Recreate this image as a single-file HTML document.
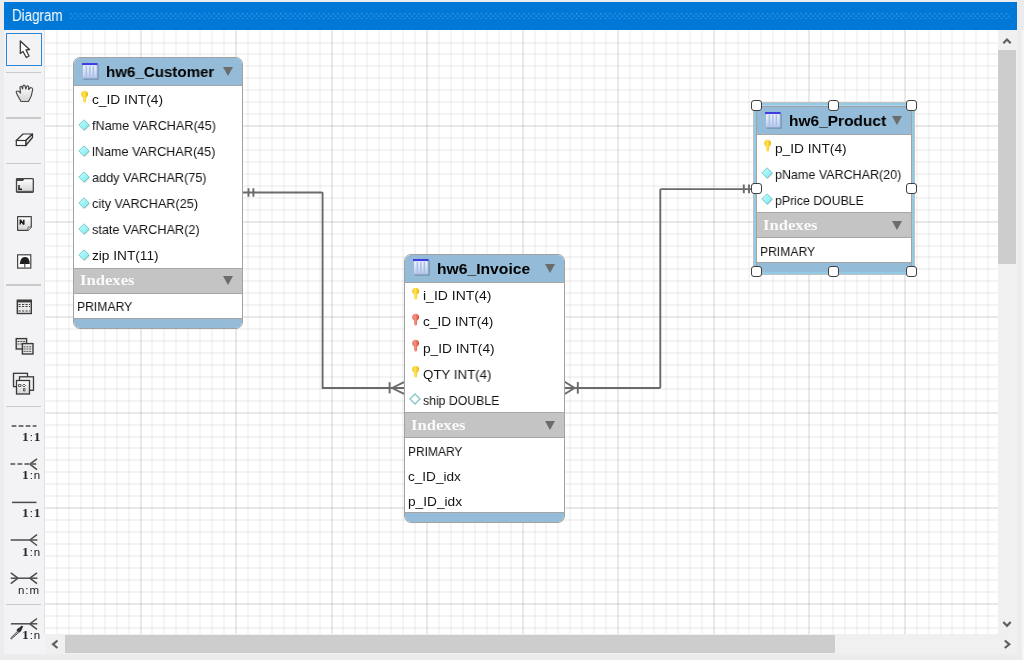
<!DOCTYPE html>
<html><head><meta charset="utf-8"><style>
*{margin:0;padding:0;box-sizing:border-box}
html,body{width:1024px;height:660px;overflow:hidden;background:#ececef;font-family:"Liberation Sans",sans-serif}
#hdr{position:absolute;left:4px;top:2px;width:1013px;height:28px;background:#0078d7}
#hdr .t{position:absolute;left:8.4px;top:5.4px;color:#fff;font-size:15.6px;line-height:18px}
#dots{position:absolute;left:65.9px;top:11.1px;width:941px;height:9px}
#tool{position:absolute;left:4px;top:30px;width:40.5px;height:624px;background:#f3f3f5}
#selbtn{position:absolute;left:6.4px;top:33px;width:35.3px;height:32.6px;border:1.3px solid #2b88d8}
.sep{position:absolute;left:6.4px;width:34.6px;height:1.6px;background:#c9c9c9}
.tsvg{position:absolute;left:0;top:0;overflow:visible}
.rtxt{position:absolute;font-family:"Liberation Sans",sans-serif;font-size:11.5px;line-height:13px;color:#222;white-space:nowrap;letter-spacing:0.9px;will-change:transform}
.rtxt i{font-style:normal;font-family:"Liberation Serif",serif;font-weight:bold;font-size:13.5px;-webkit-text-stroke:0;color:#2a2a2a}
#tline{position:absolute;left:44px;top:30px;width:1.5px;height:604px;background:#e2e2e2}
#canvas{position:absolute;left:45px;top:30px;width:953px;height:604px;background:#fff;overflow:hidden}
#vs{position:absolute;left:998px;top:30px;width:19px;height:604px;background:#f0f0f0}
#vthumb{position:absolute;left:998px;top:50px;width:18px;height:214px;background:#cdcdcd}
#hs{position:absolute;left:45px;top:634px;width:972px;height:20px;background:#f0f0f0}
#hthumb{position:absolute;left:65px;top:635px;width:770px;height:18px;background:#cdcdcd}
.tbl{position:absolute;background:#fff;border:1px solid #a2a2a2;overflow:hidden}
.tbl>div{position:absolute}
.hd{left:0;right:0;top:0;background:#94bcd8}
.ln{left:0;right:0;height:1.2px;background:#a6a6a6}
.ico{line-height:0}
.tt{font-weight:bold;font-size:15.5px;line-height:18px;color:#000;white-space:nowrap}
.tri{width:0;height:0;border-left:5.2px solid transparent;border-right:5.2px solid transparent;border-top:9.3px solid #6c6c6c}
.rt{font-size:13.4px;line-height:15.5px;color:#141414;white-space:nowrap}
.ih{left:0;right:0;background:#c4c4c4;border-top:1px solid #a8a8a8;border-bottom:1px solid #a8a8a8}
.itx{font-family:"Liberation Serif",serif;font-weight:bold;font-size:14px;line-height:16px;color:#fafafa;white-space:nowrap}
.bar{left:0;right:0;background:#94bcd8;border-top:1px solid #a4a4a4}
.sx{display:inline-block;transform-origin:0 0;will-change:transform}
.hdl{position:absolute;width:11px;height:11px;border:1.7px solid #404040;border-radius:3px;background:#fff}
#sel{position:absolute;left:752.6px;top:102.2px;width:162px;height:172.8px;border:1px solid #c0c0c0;box-shadow:inset 0 0 0 2.8px #93cbe6}
</style></head><body>
<svg width="0" height="0" style="position:absolute"><defs>
<linearGradient id="tg" x1="0" y1="0" x2="0" y2="1"><stop offset="0" stop-color="#f4f8fe"/><stop offset="1" stop-color="#b9ccee"/></linearGradient>
<linearGradient id="ky" x1="0" y1="0" x2="1" y2="0"><stop offset="0" stop-color="#f5c818"/><stop offset="0.45" stop-color="#ffe45a"/><stop offset="1" stop-color="#e6b000"/></linearGradient>
<linearGradient id="kr" x1="0" y1="0" x2="1" y2="0"><stop offset="0" stop-color="#e87c6a"/><stop offset="0.45" stop-color="#f09080"/><stop offset="1" stop-color="#d84834"/></linearGradient>
<linearGradient id="dg" x1="0" y1="0" x2="1" y2="1"><stop offset="0" stop-color="#d0fcfc"/><stop offset="1" stop-color="#6eecf0"/></linearGradient>
<linearGradient id="ig" x1="0" y1="0" x2="0" y2="1"><stop offset="0" stop-color="#ffffff"/><stop offset="1" stop-color="#d4d4d4"/></linearGradient>
</defs></svg>
<div id="hdr"><span class="t"><span class="sx" id="tdiag" style="transform:scaleX(0.8568)">Diagram</span></span>
<svg id="dots" width="944" height="9"><defs><pattern id="dp" width="4.774" height="4.8" patternUnits="userSpaceOnUse"><rect x="0" y="0" width="1.35" height="1.35" fill="#449ae2"/><rect x="2.387" y="2.4" width="1.35" height="1.35" fill="#449ae2"/></pattern></defs><rect x="0" y="0" width="941" height="6.2" fill="url(#dp)"/></svg>
</div>

<div id="tool"></div>
<div id="selbtn"></div>
<div class="sep" style="top:71.60px"></div><div class="sep" style="top:117.20px"></div><div class="sep" style="top:162.60px"></div><div class="sep" style="top:284.10px"></div><div class="sep" style="top:405.70px"></div><div class="sep" style="top:603.80px"></div>
<svg class="tsvg" width="48" height="660">
<!-- cursor -->
<path d="M20.3 41 L20.3 53.5 L23 51.5 L26.3 57.5 L29 56 L26 50 L29.5 49.5 Z" fill="#fff" stroke="#3a3a3a" stroke-width="1.3" stroke-linejoin="round"/>
<!-- hand -->
<path d="M21 101.5 L16.6 93.5 Q15.6 91 17.5 91 Q19 91 20.5 93 L20 88 Q20 86 21.6 86.6 L22.6 89 L23 85.8 Q24 84.5 25 85.8 L25.8 89 L26.8 86.2 Q28 85.5 28.8 86.8 L28.5 89.5 L30.8 87.5 Q32.5 87.5 32.7 89.5 Q32 96 28.5 101.5 Z" fill="url(#ig)" stroke="#4a4a4a" stroke-width="1.2" stroke-linejoin="round"/>
<!-- eraser -->
<path d="M16.3 140.5 L23 134 L32.5 134 L25.8 140.5 Z" fill="#fafafa" stroke="#333" stroke-width="1.2" stroke-linejoin="round"/>
<path d="M25.8 140.5 L32.5 134 L32.5 137.5 L25.8 145.5 Z" fill="#e0e0e0" stroke="#333" stroke-width="1.2" stroke-linejoin="round"/>
<rect x="16.3" y="140.5" width="9.5" height="5" fill="#fff" stroke="#333" stroke-width="1.2"/>
<!-- layer -->
<rect x="16.5" y="178.7" width="16.8" height="13.6" rx="0.8" fill="url(#ig)" stroke="#444" stroke-width="1.3"/>
<path d="M16.5 178.7 H24.5 L23 181 H16.5 Z" fill="#444"/>
<rect x="16.5" y="190.8" width="16.8" height="1.6" fill="#555"/>
<path d="M19 185 V189.2 H22" stroke="#222" stroke-width="1.5" fill="none"/>
<!-- note -->
<path d="M17.6 216.6 H31.3 V227 L28 230.3 H17.6 Z" fill="url(#ig)" stroke="#444" stroke-width="1.2" stroke-linejoin="round"/>
<path d="M20.3 224.5 V219.8 L23.8 224.5 V219.8" stroke="#1e1e1e" stroke-width="1.5" fill="none" stroke-linejoin="bevel"/><path d="M28 230.3 L28 227.2 L31.3 227" fill="#fff" stroke="#555" stroke-width="0.9"/>
<!-- image -->
<rect x="17.6" y="254.8" width="13.2" height="13.3" fill="#fff" stroke="#444" stroke-width="1.2"/>
<path d="M19.8 264 Q20.2 259.2 22.8 257.4 Q25.6 256.2 28.2 258.2 Q29.9 260.6 29.7 264 Z" fill="#1e1e1e"/>
<rect x="24.3" y="263" width="1" height="4.5" fill="#333"/>
<!-- table -->
<rect x="17.3" y="300.2" width="14" height="13.3" fill="#e8e8e8" stroke="#3a3a3a" stroke-width="1.4"/>
<rect x="17.3" y="300.2" width="14" height="2.2" fill="#3a3a3a"/>
<path d="M18.5 304.5 H30 M18.5 306.5 H30 M18.5 311 H30" stroke="#444" stroke-width="1" stroke-dasharray="2.2 1.3"/>
<!-- view -->
<rect x="16.2" y="338.6" width="10.4" height="10.4" fill="#e4e4e4" stroke="#3a3a3a" stroke-width="1.4"/>
<path d="M17.5 341.5 H25.5 M17.5 344 H25.5" stroke="#555" stroke-width="1" stroke-dasharray="2 0.8"/>
<rect x="22.4" y="343.6" width="10.6" height="10.4" fill="#e8e8e8" stroke="#3a3a3a" stroke-width="1.4"/>
<path d="M23.6 346.8 H32 M23.6 349 H32 M23.6 351.4 H32" stroke="#555" stroke-width="1" stroke-dasharray="2 0.8"/>
<!-- routine group -->
<rect x="13.5" y="373.3" width="14" height="13.3" fill="#eee" stroke="#3a3a3a" stroke-width="1.3"/>
<rect x="19.5" y="376.8" width="14" height="13.5" fill="#eee" stroke="#3a3a3a" stroke-width="1.3"/>
<rect x="16.5" y="380.5" width="13" height="13.5" fill="url(#ig)" stroke="#3a3a3a" stroke-width="1.3"/>
<path d="M18.5 384.5 H21 V386.5 H18.5Z M22.5 385.5 L24 384 L25.5 385.5 L24 387Z M23.5 388.5 H25 V391 H23.5Z" stroke="#444" stroke-width="0.8" fill="none"/>
<!-- dropper -->
<path d="M17.6 631.2 L11.2 637.6 Q10.2 638.8 11.4 639 L18.8 632.4 Z" fill="#b8b8b8" stroke="#505050" stroke-width="1"/>
<path d="M16.4 630.3 Q17.5 628 19.8 627.2 L21.4 625.8 Q22.8 625.6 23.2 626.6 L22.2 628.4 Q21.6 631 19.4 632.6 Z" fill="#2e2e2e"/>
</svg>
<svg class="tsvg" width="48" height="660"><g stroke="#4c4c4c" stroke-width="1.5" fill="none"><path d="M11.7 426 H36.5" stroke-dasharray="4.7 2.3"/></g></svg>
<div class="rtxt" style="left:21.8px;top:429.6px"><i>1</i>:<i>1</i></div>
<svg class="tsvg" width="48" height="660"><g stroke="#4c4c4c" stroke-width="1.5" fill="none"><path d="M10.5 464.1 H37" stroke-dasharray="4.7 2.3"/><path d="M29.8 464.1 L37 458.8 M29.8 464.1 L37 469.6"/></g></svg>
<div class="rtxt" style="left:22.0px;top:468.4px"><i>1</i>:n</div>
<svg class="tsvg" width="48" height="660"><g stroke="#4c4c4c" stroke-width="1.5" fill="none"><path d="M12 502.4 H36.5"/></g></svg>
<div class="rtxt" style="left:21.8px;top:506.2px"><i>1</i>:<i>1</i></div>
<svg class="tsvg" width="48" height="660"><g stroke="#4c4c4c" stroke-width="1.5" fill="none"><path d="M10.7 540 H37.4"/><path d="M29.8 540 L37 534.7 M29.8 540 L37 545.5"/></g></svg>
<div class="rtxt" style="left:21.8px;top:544.8px"><i>1</i>:n</div>
<svg class="tsvg" width="48" height="660"><g stroke="#4c4c4c" stroke-width="1.5" fill="none"><path d="M10.7 578.2 H37.4"/><path d="M29.8 578.2 L37 572.9000000000001 M29.8 578.2 L37 583.7"/><path d="M18 578.2 L10.8 572.9000000000001 M18 578.2 L10.8 583.7"/></g></svg>
<div class="rtxt" style="left:17.6px;top:584.0px">n:m</div>
<svg class="tsvg" width="48" height="660"><g stroke="#4c4c4c" stroke-width="1.5" fill="none"><path d="M10.9 623.8 H37.3"/><path d="M29.8 623.8 L37 618.5 M29.8 623.8 L37 629.3"/></g></svg>
<div class="rtxt" style="left:21.9px;top:628.2px"><i>1</i>:n</div>

<div id="tline"></div>
<div style="position:absolute;left:1021.6px;top:30px;width:2.4px;height:630px;background:#f6f6f7"></div>
<div id="canvas">
<svg width="953" height="604" style="position:absolute;left:0;top:0">
<rect x="11" y="0" width="2" height="604" fill-opacity="0.038"/>
<rect x="23" y="0" width="2" height="604" fill-opacity="0.038"/>
<rect x="35" y="0" width="2" height="604" fill-opacity="0.038"/>
<rect x="47" y="0" width="2" height="604" fill-opacity="0.038"/>
<rect x="59" y="0" width="2" height="604" fill-opacity="0.038"/>
<rect x="71" y="0" width="2" height="604" fill-opacity="0.038"/>
<rect x="83" y="0" width="2" height="604" fill-opacity="0.038"/>
<rect x="95" y="0" width="2" height="604" fill-opacity="0.085"/>
<rect x="106" y="0" width="2" height="604" fill-opacity="0.038"/>
<rect x="118" y="0" width="2" height="604" fill-opacity="0.038"/>
<rect x="130" y="0" width="2" height="604" fill-opacity="0.038"/>
<rect x="142" y="0" width="2" height="604" fill-opacity="0.038"/>
<rect x="154" y="0" width="2" height="604" fill-opacity="0.038"/>
<rect x="166" y="0" width="2" height="604" fill-opacity="0.038"/>
<rect x="178" y="0" width="2" height="604" fill-opacity="0.038"/>
<rect x="190" y="0" width="2" height="604" fill-opacity="0.085"/>
<rect x="202" y="0" width="2" height="604" fill-opacity="0.038"/>
<rect x="214" y="0" width="2" height="604" fill-opacity="0.038"/>
<rect x="226" y="0" width="2" height="604" fill-opacity="0.038"/>
<rect x="238" y="0" width="2" height="604" fill-opacity="0.038"/>
<rect x="250" y="0" width="2" height="604" fill-opacity="0.038"/>
<rect x="262" y="0" width="2" height="604" fill-opacity="0.038"/>
<rect x="274" y="0" width="2" height="604" fill-opacity="0.038"/>
<rect x="286" y="0" width="2" height="604" fill-opacity="0.085"/>
<rect x="297" y="0" width="2" height="604" fill-opacity="0.038"/>
<rect x="309" y="0" width="2" height="604" fill-opacity="0.038"/>
<rect x="321" y="0" width="2" height="604" fill-opacity="0.038"/>
<rect x="333" y="0" width="2" height="604" fill-opacity="0.038"/>
<rect x="345" y="0" width="2" height="604" fill-opacity="0.038"/>
<rect x="357" y="0" width="2" height="604" fill-opacity="0.038"/>
<rect x="369" y="0" width="2" height="604" fill-opacity="0.038"/>
<rect x="381" y="0" width="2" height="604" fill-opacity="0.085"/>
<rect x="393" y="0" width="2" height="604" fill-opacity="0.038"/>
<rect x="405" y="0" width="2" height="604" fill-opacity="0.038"/>
<rect x="417" y="0" width="2" height="604" fill-opacity="0.038"/>
<rect x="429" y="0" width="2" height="604" fill-opacity="0.038"/>
<rect x="441" y="0" width="2" height="604" fill-opacity="0.038"/>
<rect x="453" y="0" width="2" height="604" fill-opacity="0.038"/>
<rect x="465" y="0" width="2" height="604" fill-opacity="0.038"/>
<rect x="477" y="0" width="2" height="604" fill-opacity="0.085"/>
<rect x="489" y="0" width="2" height="604" fill-opacity="0.038"/>
<rect x="500" y="0" width="2" height="604" fill-opacity="0.038"/>
<rect x="512" y="0" width="2" height="604" fill-opacity="0.038"/>
<rect x="524" y="0" width="2" height="604" fill-opacity="0.038"/>
<rect x="536" y="0" width="2" height="604" fill-opacity="0.038"/>
<rect x="548" y="0" width="2" height="604" fill-opacity="0.038"/>
<rect x="560" y="0" width="2" height="604" fill-opacity="0.038"/>
<rect x="572" y="0" width="2" height="604" fill-opacity="0.085"/>
<rect x="584" y="0" width="2" height="604" fill-opacity="0.038"/>
<rect x="596" y="0" width="2" height="604" fill-opacity="0.038"/>
<rect x="608" y="0" width="2" height="604" fill-opacity="0.038"/>
<rect x="620" y="0" width="2" height="604" fill-opacity="0.038"/>
<rect x="632" y="0" width="2" height="604" fill-opacity="0.038"/>
<rect x="644" y="0" width="2" height="604" fill-opacity="0.038"/>
<rect x="656" y="0" width="2" height="604" fill-opacity="0.038"/>
<rect x="668" y="0" width="2" height="604" fill-opacity="0.085"/>
<rect x="680" y="0" width="2" height="604" fill-opacity="0.038"/>
<rect x="692" y="0" width="2" height="604" fill-opacity="0.038"/>
<rect x="703" y="0" width="2" height="604" fill-opacity="0.038"/>
<rect x="715" y="0" width="2" height="604" fill-opacity="0.038"/>
<rect x="727" y="0" width="2" height="604" fill-opacity="0.038"/>
<rect x="739" y="0" width="2" height="604" fill-opacity="0.038"/>
<rect x="751" y="0" width="2" height="604" fill-opacity="0.038"/>
<rect x="763" y="0" width="2" height="604" fill-opacity="0.085"/>
<rect x="775" y="0" width="2" height="604" fill-opacity="0.038"/>
<rect x="787" y="0" width="2" height="604" fill-opacity="0.038"/>
<rect x="799" y="0" width="2" height="604" fill-opacity="0.038"/>
<rect x="811" y="0" width="2" height="604" fill-opacity="0.038"/>
<rect x="823" y="0" width="2" height="604" fill-opacity="0.038"/>
<rect x="835" y="0" width="2" height="604" fill-opacity="0.038"/>
<rect x="847" y="0" width="2" height="604" fill-opacity="0.038"/>
<rect x="859" y="0" width="2" height="604" fill-opacity="0.085"/>
<rect x="871" y="0" width="2" height="604" fill-opacity="0.038"/>
<rect x="883" y="0" width="2" height="604" fill-opacity="0.038"/>
<rect x="895" y="0" width="2" height="604" fill-opacity="0.038"/>
<rect x="906" y="0" width="2" height="604" fill-opacity="0.038"/>
<rect x="918" y="0" width="2" height="604" fill-opacity="0.038"/>
<rect x="930" y="0" width="2" height="604" fill-opacity="0.038"/>
<rect x="942" y="0" width="2" height="604" fill-opacity="0.038"/>
<rect x="0" y="12" width="953" height="2" fill-opacity="0.045"/>
<rect x="0" y="23" width="953" height="2" fill-opacity="0.045"/>
<rect x="0" y="35" width="953" height="2" fill-opacity="0.045"/>
<rect x="0" y="47" width="953" height="2" fill-opacity="0.045"/>
<rect x="0" y="59" width="953" height="2" fill-opacity="0.045"/>
<rect x="0" y="71" width="953" height="2" fill-opacity="0.045"/>
<rect x="0" y="83" width="953" height="2" fill-opacity="0.045"/>
<rect x="0" y="95" width="953" height="2" fill-opacity="0.09"/>
<rect x="0" y="107" width="953" height="2" fill-opacity="0.045"/>
<rect x="0" y="119" width="953" height="2" fill-opacity="0.045"/>
<rect x="0" y="131" width="953" height="2" fill-opacity="0.045"/>
<rect x="0" y="143" width="953" height="2" fill-opacity="0.045"/>
<rect x="0" y="155" width="953" height="2" fill-opacity="0.045"/>
<rect x="0" y="167" width="953" height="2" fill-opacity="0.045"/>
<rect x="0" y="179" width="953" height="2" fill-opacity="0.045"/>
<rect x="0" y="191" width="953" height="2" fill-opacity="0.09"/>
<rect x="0" y="203" width="953" height="2" fill-opacity="0.045"/>
<rect x="0" y="215" width="953" height="2" fill-opacity="0.045"/>
<rect x="0" y="226" width="953" height="2" fill-opacity="0.045"/>
<rect x="0" y="238" width="953" height="2" fill-opacity="0.045"/>
<rect x="0" y="250" width="953" height="2" fill-opacity="0.045"/>
<rect x="0" y="262" width="953" height="2" fill-opacity="0.045"/>
<rect x="0" y="274" width="953" height="2" fill-opacity="0.045"/>
<rect x="0" y="286" width="953" height="2" fill-opacity="0.09"/>
<rect x="0" y="298" width="953" height="2" fill-opacity="0.045"/>
<rect x="0" y="310" width="953" height="2" fill-opacity="0.045"/>
<rect x="0" y="322" width="953" height="2" fill-opacity="0.045"/>
<rect x="0" y="334" width="953" height="2" fill-opacity="0.045"/>
<rect x="0" y="346" width="953" height="2" fill-opacity="0.045"/>
<rect x="0" y="358" width="953" height="2" fill-opacity="0.045"/>
<rect x="0" y="370" width="953" height="2" fill-opacity="0.045"/>
<rect x="0" y="382" width="953" height="2" fill-opacity="0.09"/>
<rect x="0" y="394" width="953" height="2" fill-opacity="0.045"/>
<rect x="0" y="406" width="953" height="2" fill-opacity="0.045"/>
<rect x="0" y="417" width="953" height="2" fill-opacity="0.045"/>
<rect x="0" y="429" width="953" height="2" fill-opacity="0.045"/>
<rect x="0" y="441" width="953" height="2" fill-opacity="0.045"/>
<rect x="0" y="453" width="953" height="2" fill-opacity="0.045"/>
<rect x="0" y="465" width="953" height="2" fill-opacity="0.045"/>
<rect x="0" y="477" width="953" height="2" fill-opacity="0.09"/>
<rect x="0" y="489" width="953" height="2" fill-opacity="0.045"/>
<rect x="0" y="501" width="953" height="2" fill-opacity="0.045"/>
<rect x="0" y="513" width="953" height="2" fill-opacity="0.045"/>
<rect x="0" y="525" width="953" height="2" fill-opacity="0.045"/>
<rect x="0" y="537" width="953" height="2" fill-opacity="0.045"/>
<rect x="0" y="549" width="953" height="2" fill-opacity="0.045"/>
<rect x="0" y="561" width="953" height="2" fill-opacity="0.045"/>
<rect x="0" y="573" width="953" height="2" fill-opacity="0.09"/>
<rect x="0" y="585" width="953" height="2" fill-opacity="0.045"/>
<rect x="0" y="597" width="953" height="2" fill-opacity="0.045"/>
</svg>
</div>

<div id="vs"></div><div id="vthumb"></div>
<div id="hs"></div><div id="hthumb"></div>
<svg width="1024" height="660" style="position:absolute;left:0;top:0">
<g stroke="#606060" stroke-width="2.2" fill="none" stroke-linejoin="miter">
<path d="M1003.3 43.3 L1007 39.5 L1010.7 43.3"/>
<path d="M1003.3 622 L1007 625.8 L1010.7 622"/>
<path d="M57.5 640.5 L53 644.3 L57.5 648"/>
<path d="M1004.8 640.5 L1009.3 644.3 L1004.8 648"/>
</g></svg>

<svg width="1024" height="660" style="position:absolute;left:0;top:0">
<g stroke="#6a6a6a" stroke-width="1.9" fill="none">
<path d="M242.5 192.5 L321.6 192.5 Q322.6 192.5 322.6 193.5 L322.6 388 L404 388"/>
<path d="M248.5 188.2 V196.7 M253.4 188.2 V196.7"/>
<path d="M389.6 382.2 V393.4"/>
<path d="M392 388 L404 382.2 M392 388 L404 393.9"/>
<path d="M564.7 388 L659.3 388 Q660.3 388 660.3 387 L660.3 190.1 Q660.3 189.1 661.3 189.1 L752 189.1"/>
<path d="M577.8 382 V393.7"/>
<path d="M574.6 388 L564.7 381.7 M574.6 388 L564.7 394"/>
<path d="M743.8 184.4 V193.2 M749 184.4 V193.2"/>
</g></svg>
<div class="tbl" style="left:73px;top:57px;width:170px;height:271.64px;border-radius:7px">
<div class="hd" style="height:27.30px"></div>
<div class="ico" style="left:7.6px;top:4.9px"><svg width="18" height="18" viewBox="0 0 18 18"><rect x="1.6" y="1.6" width="15" height="15" fill="#2c3a50" opacity="0.4"/><rect x="0.5" y="0.5" width="14.6" height="14.6" fill="url(#tg)" stroke="#a4b8de" stroke-width="1"/><rect x="3.6" y="3" width="1.5" height="11" fill="#aabfe6"/><rect x="7.1" y="3" width="1.5" height="11" fill="#aabfe6"/><rect x="10.6" y="3" width="1.5" height="11" fill="#aabfe6"/><rect x="0" y="0" width="15.6" height="2.1" fill="#3d3de0"/></svg></div>
<div class="tt" style="left:31.80px;top:5.20px"><span class="sx" id="t1" style="transform:scaleX(0.9746)">hw6_Customer</span></div>
<div class="tri" style="right:8.6px;top:9.0px"></div>
<div class="ln" style="top:27.30px"></div>
<div class="ico" style="left:5.8px;top:32.40px"><svg width="9" height="13" viewBox="0 0 9 13"><path d="M4.6 0.7 C6.6 0.7 8.1 2.2 8.1 4.2 C8.1 5.6 7.3 6.8 6.2 7.4 L6.0 11.3 C6.0 12.2 5.3 12.6 4.6 12.6 C3.9 12.6 3.2 12.2 3.2 11.3 L3.0 7.4 C1.9 6.8 1.1 5.6 1.1 4.2 C1.1 2.2 2.6 0.7 4.6 0.7Z" fill="url(#ky)"/></svg></div>
<div class="rt" style="left:17.70px;top:33.90px"><span class="sx" id="t2" style="transform:scaleX(1.0260)">c_ID INT(4)</span></div>
<div class="ico" style="left:4.3px;top:60.67px"><svg width="13" height="13" viewBox="0 0 13 13"><path d="M6.8 1.6 L12 6.8 L6.8 12 L1.6 6.8Z" fill="#000" opacity="0.18"/><path d="M6 0.8 L11.2 6 L6 11.2 L0.8 6Z" fill="url(#dg)" stroke="#6cbcc4" stroke-width="0.8"/></svg></div>
<div class="rt" style="left:17.70px;top:59.97px"><span class="sx" id="t3" style="transform:scaleX(0.9424)">fName VARCHAR(45)</span></div>
<div class="ico" style="left:4.3px;top:86.74px"><svg width="13" height="13" viewBox="0 0 13 13"><path d="M6.8 1.6 L12 6.8 L6.8 12 L1.6 6.8Z" fill="#000" opacity="0.18"/><path d="M6 0.8 L11.2 6 L6 11.2 L0.8 6Z" fill="url(#dg)" stroke="#6cbcc4" stroke-width="0.8"/></svg></div>
<div class="rt" style="left:17.70px;top:86.04px"><span class="sx" id="t4" style="transform:scaleX(0.9440)">lName VARCHAR(45)</span></div>
<div class="ico" style="left:4.3px;top:112.81px"><svg width="13" height="13" viewBox="0 0 13 13"><path d="M6.8 1.6 L12 6.8 L6.8 12 L1.6 6.8Z" fill="#000" opacity="0.18"/><path d="M6 0.8 L11.2 6 L6 11.2 L0.8 6Z" fill="url(#dg)" stroke="#6cbcc4" stroke-width="0.8"/></svg></div>
<div class="rt" style="left:17.70px;top:112.11px"><span class="sx" id="t5" style="transform:scaleX(0.9458)">addy VARCHAR(75)</span></div>
<div class="ico" style="left:4.3px;top:138.88px"><svg width="13" height="13" viewBox="0 0 13 13"><path d="M6.8 1.6 L12 6.8 L6.8 12 L1.6 6.8Z" fill="#000" opacity="0.18"/><path d="M6 0.8 L11.2 6 L6 11.2 L0.8 6Z" fill="url(#dg)" stroke="#6cbcc4" stroke-width="0.8"/></svg></div>
<div class="rt" style="left:17.70px;top:138.18px"><span class="sx" id="t6" style="transform:scaleX(0.9455)">city VARCHAR(25)</span></div>
<div class="ico" style="left:4.3px;top:164.95px"><svg width="13" height="13" viewBox="0 0 13 13"><path d="M6.8 1.6 L12 6.8 L6.8 12 L1.6 6.8Z" fill="#000" opacity="0.18"/><path d="M6 0.8 L11.2 6 L6 11.2 L0.8 6Z" fill="url(#dg)" stroke="#6cbcc4" stroke-width="0.8"/></svg></div>
<div class="rt" style="left:17.70px;top:164.25px"><span class="sx" id="t7" style="transform:scaleX(0.9471)">state VARCHAR(2)</span></div>
<div class="ico" style="left:4.3px;top:191.02px"><svg width="13" height="13" viewBox="0 0 13 13"><path d="M6.8 1.6 L12 6.8 L6.8 12 L1.6 6.8Z" fill="#000" opacity="0.18"/><path d="M6 0.8 L11.2 6 L6 11.2 L0.8 6Z" fill="url(#dg)" stroke="#6cbcc4" stroke-width="0.8"/></svg></div>
<div class="rt" style="left:17.70px;top:190.32px"><span class="sx" id="t8" style="transform:scaleX(1.0209)">zip INT(11)</span></div>
<div class="ih" style="top:210.09px;height:25.90px"></div>
<div class="itx" style="left:5.60px;top:215.49px"><span class="sx" id="t9" style="transform:scaleX(1.1872)">Indexes</span></div>
<div class="tri" style="right:8.6px;top:218.49px"></div>
<div class="rt" style="left:2.70px;top:241.49px"><span class="sx" id="t10" style="transform:scaleX(0.9098)">PRIMARY</span></div>
<div class="bar" style="top:259.84px;height:11.50px"></div>
</div>
<div class="tbl" style="left:404px;top:253.5px;width:161px;height:269.60px;border-radius:7px">
<div class="hd" style="height:27.30px"></div>
<div class="ico" style="left:7.6px;top:4.9px"><svg width="18" height="18" viewBox="0 0 18 18"><rect x="1.6" y="1.6" width="15" height="15" fill="#2c3a50" opacity="0.4"/><rect x="0.5" y="0.5" width="14.6" height="14.6" fill="url(#tg)" stroke="#a4b8de" stroke-width="1"/><rect x="3.6" y="3" width="1.5" height="11" fill="#aabfe6"/><rect x="7.1" y="3" width="1.5" height="11" fill="#aabfe6"/><rect x="10.6" y="3" width="1.5" height="11" fill="#aabfe6"/><rect x="0" y="0" width="15.6" height="2.1" fill="#3d3de0"/></svg></div>
<div class="tt" style="left:31.80px;top:5.20px"><span class="sx" id="t11" style="transform:scaleX(1.0110)">hw6_Invoice</span></div>
<div class="tri" style="right:8.6px;top:9.0px"></div>
<div class="ln" style="top:27.30px"></div>
<div class="ico" style="left:5.8px;top:32.40px"><svg width="9" height="13" viewBox="0 0 9 13"><path d="M4.6 0.7 C6.6 0.7 8.1 2.2 8.1 4.2 C8.1 5.6 7.3 6.8 6.2 7.4 L6.0 11.3 C6.0 12.2 5.3 12.6 4.6 12.6 C3.9 12.6 3.2 12.2 3.2 11.3 L3.0 7.4 C1.9 6.8 1.1 5.6 1.1 4.2 C1.1 2.2 2.6 0.7 4.6 0.7Z" fill="url(#ky)"/></svg></div>
<div class="rt" style="left:17.70px;top:33.90px"><span class="sx" id="t12" style="transform:scaleX(1.0445)">i_ID INT(4)</span></div>
<div class="ico" style="left:5.8px;top:58.47px"><svg width="9" height="13" viewBox="0 0 9 13"><path d="M4.6 0.7 C6.6 0.7 8.1 2.2 8.1 4.2 C8.1 5.6 7.3 6.8 6.2 7.4 L6.0 11.3 C6.0 12.2 5.3 12.6 4.6 12.6 C3.9 12.6 3.2 12.2 3.2 11.3 L3.0 7.4 C1.9 6.8 1.1 5.6 1.1 4.2 C1.1 2.2 2.6 0.7 4.6 0.7Z" fill="url(#kr)"/></svg></div>
<div class="rt" style="left:17.70px;top:59.97px"><span class="sx" id="t13" style="transform:scaleX(1.0173)">c_ID INT(4)</span></div>
<div class="ico" style="left:5.8px;top:84.54px"><svg width="9" height="13" viewBox="0 0 9 13"><path d="M4.6 0.7 C6.6 0.7 8.1 2.2 8.1 4.2 C8.1 5.6 7.3 6.8 6.2 7.4 L6.0 11.3 C6.0 12.2 5.3 12.6 4.6 12.6 C3.9 12.6 3.2 12.2 3.2 11.3 L3.0 7.4 C1.9 6.8 1.1 5.6 1.1 4.2 C1.1 2.2 2.6 0.7 4.6 0.7Z" fill="url(#kr)"/></svg></div>
<div class="rt" style="left:17.70px;top:86.04px"><span class="sx" id="t14" style="transform:scaleX(1.0235)">p_ID INT(4)</span></div>
<div class="ico" style="left:5.8px;top:110.61px"><svg width="9" height="13" viewBox="0 0 9 13"><path d="M4.6 0.7 C6.6 0.7 8.1 2.2 8.1 4.2 C8.1 5.6 7.3 6.8 6.2 7.4 L6.0 11.3 C6.0 12.2 5.3 12.6 4.6 12.6 C3.9 12.6 3.2 12.2 3.2 11.3 L3.0 7.4 C1.9 6.8 1.1 5.6 1.1 4.2 C1.1 2.2 2.6 0.7 4.6 0.7Z" fill="url(#ky)"/></svg></div>
<div class="rt" style="left:17.70px;top:112.11px"><span class="sx" id="t15" style="transform:scaleX(0.9920)">QTY INT(4)</span></div>
<div class="ico" style="left:4.3px;top:138.88px"><svg width="12" height="12" viewBox="0 0 12 12"><path d="M6 1 L11 6 L6 11 L1 6Z" fill="#fff" stroke="#80c6c8" stroke-width="1.3"/></svg></div>
<div class="rt" style="left:17.70px;top:138.18px"><span class="sx" id="t16" style="transform:scaleX(0.9153)">ship DOUBLE</span></div>
<div class="ih" style="top:157.95px;height:25.90px"></div>
<div class="itx" style="left:5.60px;top:163.35px"><span class="sx" id="t17" style="transform:scaleX(1.1872)">Indexes</span></div>
<div class="tri" style="right:8.6px;top:166.35px"></div>
<div class="rt" style="left:2.70px;top:189.35px"><span class="sx" id="t18" style="transform:scaleX(0.8950)">PRIMARY</span></div>
<div class="rt" style="left:2.70px;top:214.40px"><span class="sx" id="t19" style="transform:scaleX(1.0133)">c_ID_idx</span></div>
<div class="rt" style="left:2.70px;top:239.45px"><span class="sx" id="t20" style="transform:scaleX(1.0216)">p_ID_idx</span></div>
<div class="bar" style="top:257.80px;height:11.50px"></div>
</div>
<div id="sel"></div>
<div class="tbl" style="left:756px;top:105.7px;width:156px;height:165.96px;border-radius:0;border-bottom:0">
<div class="hd" style="height:27.30px"></div>
<div class="ico" style="left:7.6px;top:4.9px"><svg width="18" height="18" viewBox="0 0 18 18"><rect x="1.6" y="1.6" width="15" height="15" fill="#2c3a50" opacity="0.4"/><rect x="0.5" y="0.5" width="14.6" height="14.6" fill="url(#tg)" stroke="#a4b8de" stroke-width="1"/><rect x="3.6" y="3" width="1.5" height="11" fill="#aabfe6"/><rect x="7.1" y="3" width="1.5" height="11" fill="#aabfe6"/><rect x="10.6" y="3" width="1.5" height="11" fill="#aabfe6"/><rect x="0" y="0" width="15.6" height="2.1" fill="#3d3de0"/></svg></div>
<div class="tt" style="left:31.80px;top:5.60px"><span class="sx" id="t21" style="transform:scaleX(0.9977)">hw6_Product</span></div>
<div class="tri" style="right:8.6px;top:9.0px"></div>
<div class="ln" style="top:27.30px"></div>
<div class="ico" style="left:5.8px;top:32.40px"><svg width="9" height="13" viewBox="0 0 9 13"><path d="M4.6 0.7 C6.6 0.7 8.1 2.2 8.1 4.2 C8.1 5.6 7.3 6.8 6.2 7.4 L6.0 11.3 C6.0 12.2 5.3 12.6 4.6 12.6 C3.9 12.6 3.2 12.2 3.2 11.3 L3.0 7.4 C1.9 6.8 1.1 5.6 1.1 4.2 C1.1 2.2 2.6 0.7 4.6 0.7Z" fill="url(#ky)"/></svg></div>
<div class="rt" style="left:17.70px;top:33.90px"><span class="sx" id="t22" style="transform:scaleX(1.0235)">p_ID INT(4)</span></div>
<div class="ico" style="left:4.3px;top:60.67px"><svg width="13" height="13" viewBox="0 0 13 13"><path d="M6.8 1.6 L12 6.8 L6.8 12 L1.6 6.8Z" fill="#000" opacity="0.18"/><path d="M6 0.8 L11.2 6 L6 11.2 L0.8 6Z" fill="url(#dg)" stroke="#6cbcc4" stroke-width="0.8"/></svg></div>
<div class="rt" style="left:17.70px;top:59.97px"><span class="sx" id="t23" style="transform:scaleX(0.9343)">pName VARCHAR(20)</span></div>
<div class="ico" style="left:4.3px;top:86.74px"><svg width="13" height="13" viewBox="0 0 13 13"><path d="M6.8 1.6 L12 6.8 L6.8 12 L1.6 6.8Z" fill="#000" opacity="0.18"/><path d="M6 0.8 L11.2 6 L6 11.2 L0.8 6Z" fill="url(#dg)" stroke="#6cbcc4" stroke-width="0.8"/></svg></div>
<div class="rt" style="left:17.70px;top:86.04px"><span class="sx" id="t24" style="transform:scaleX(0.9178)">pPrice DOUBLE</span></div>
<div class="ih" style="top:105.81px;height:25.90px"></div>
<div class="itx" style="left:5.60px;top:111.21px"><span class="sx" id="t25" style="transform:scaleX(1.1872)">Indexes</span></div>
<div class="tri" style="right:8.6px;top:114.21px"></div>
<div class="rt" style="left:2.70px;top:137.21px"><span class="sx" id="t26" style="transform:scaleX(0.9082)">PRIMARY</span></div>
<div class="bar" style="top:155.56px;height:10.10px"></div>
</div>
<div class="hdl" style="left:750.50px;top:100.00px"></div>
<div class="hdl" style="left:828.00px;top:100.00px"></div>
<div class="hdl" style="left:905.50px;top:100.00px"></div>
<div class="hdl" style="left:750.50px;top:183.30px"></div>
<div class="hdl" style="left:905.50px;top:183.30px"></div>
<div class="hdl" style="left:750.50px;top:265.50px"></div>
<div class="hdl" style="left:828.00px;top:265.50px"></div>
<div class="hdl" style="left:905.50px;top:265.50px"></div>
</body></html>
